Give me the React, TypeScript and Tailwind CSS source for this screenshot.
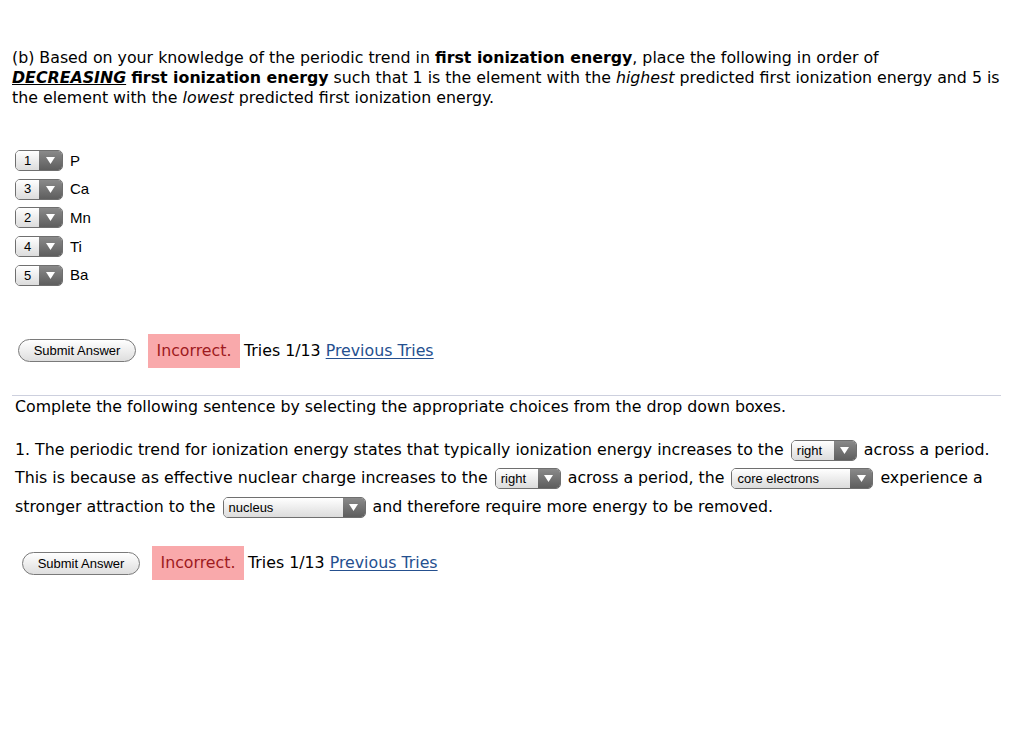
import React from "react";

const verdana = { fontFamily: "Verdana, 'DejaVu Sans', sans-serif" };

function Arrow() {
  return (
    <svg width="9" height="7" viewBox="0 0 9 7">
      <polygon points="0,0 9,0 4.5,7" fill="white" />
    </svg>
  );
}

function NumSelect({ value }: { value: string }) {
  return (
    <div className="flex h-[21px] w-[48px] overflow-hidden rounded-[5px] border border-[#6f6f6f] font-['Liberation_Sans',Arial,sans-serif]">
      <div className="flex w-[23px] items-center justify-center bg-gradient-to-b from-white to-[#dcdcdc] text-[13px] text-black">
        {value}
      </div>
      <div className="flex flex-1 items-center justify-center bg-gradient-to-b from-[#8a8a8a] to-[#5e5e5e]">
        <Arrow />
      </div>
    </div>
  );
}

function WordSelect({ value, width }: { value: string; width: string }) {
  return (
    <span
      className={`mx-[2px] inline-flex h-[21px] ${width} overflow-hidden rounded-[5px] border border-[#6f6f6f] align-middle font-['Liberation_Sans',Arial,sans-serif]`}
    >
      <span className="flex flex-1 items-center bg-gradient-to-b from-white to-[#dcdcdc] pl-[5px] text-[13px] leading-none text-black">
        {value}
      </span>
      <span className="flex w-[22px] items-center justify-center bg-gradient-to-b from-[#8a8a8a] to-[#5e5e5e]">
        <Arrow />
      </span>
    </span>
  );
}

function SubmitRow({ pad }: { pad: string }) {
  return (
    <div className={`flex items-center ${pad}`}>
      <button className="h-[23px] w-[118px] rounded-full border border-[#7a7a7a] bg-gradient-to-b from-white to-[#dedede] font-['Liberation_Sans',Arial,sans-serif] text-[13px] text-black">
        Submit Answer
      </button>
      <span className="ml-[12px] flex h-[34px] w-[92px] items-center justify-center bg-[#f9a9ab] text-[15.8px] text-[#9e1a20]">
        Incorrect.
      </span>
      <span className="ml-[4px] text-[15.8px] text-black">Tries 1/13</span>
      <a className="ml-[5px] text-[15.8px] text-[#25508f] underline underline-offset-2">Previous Tries</a>
    </div>
  );
}

export default function App() {
  const items = [
    ["1", "P"],
    ["3", "Ca"],
    ["2", "Mn"],
    ["4", "Ti"],
    ["5", "Ba"],
  ];

  return (
    <div className="min-h-[729px] w-[1024px] bg-white text-black" style={verdana}>
      <div className="pl-[12px] pr-[23px] pt-[48px]">
        <div className="whitespace-nowrap text-[15.8px] leading-[20px]">
          <div>
            (b) Based on your knowledge of the periodic trend in <b>first ionization energy</b>, place the following in
            order of
          </div>
          <div>
            <b>
              <i>
                <u>DECREASING</u>
              </i>
            </b>{" "}
            <b>first ionization energy</b> such that 1 is the element with the <i>highest</i> predicted first
            ionization energy and 5 is
          </div>
          <div>
            the element with the <i>lowest</i> predicted first ionization energy.
          </div>
        </div>

        <div className="mt-[42px] flex flex-col gap-[7.7px] pl-[3px]">
          {items.map(([n, el]) => (
            <div key={el} className="flex items-center">
              <NumSelect value={n} />
              <span className="ml-[7px] font-['Liberation_Sans',Arial,sans-serif] text-[15px] leading-[20px]">
                {el}
              </span>
            </div>
          ))}
        </div>

        <div className="mt-[48px]">
          <SubmitRow pad="pl-[6px]" />
        </div>

        <div className="mt-[27px] border-t border-[#cdd0de]" />

        <div className="mt-[1px] whitespace-nowrap pl-[3px] text-[15.8px] leading-[20px]">
          Complete the following sentence by selecting the appropriate choices from the drop down boxes.
        </div>

        <div className="mt-[19px] whitespace-nowrap pl-[3px] text-[15.8px] leading-[28.5px]">
          <div>
            1. The periodic trend for ionization energy states that typically ionization energy increases to the{" "}
            <WordSelect value="right" width="w-[66px]" /> across a period.
          </div>
          <div>
            This is because as effective nuclear charge increases to the{" "}
            <WordSelect value="right" width="w-[66px]" /> across a period, the{" "}
            <WordSelect value="core electrons" width="w-[142px]" /> experience a
          </div>
          <div>
            stronger attraction to the <WordSelect value="nucleus" width="w-[143px]" /> and therefore require more
            energy to be removed.
          </div>
        </div>

        <div className="mt-[25px]">
          <SubmitRow pad="pl-[10px]" />
        </div>
      </div>
    </div>
  );
}
